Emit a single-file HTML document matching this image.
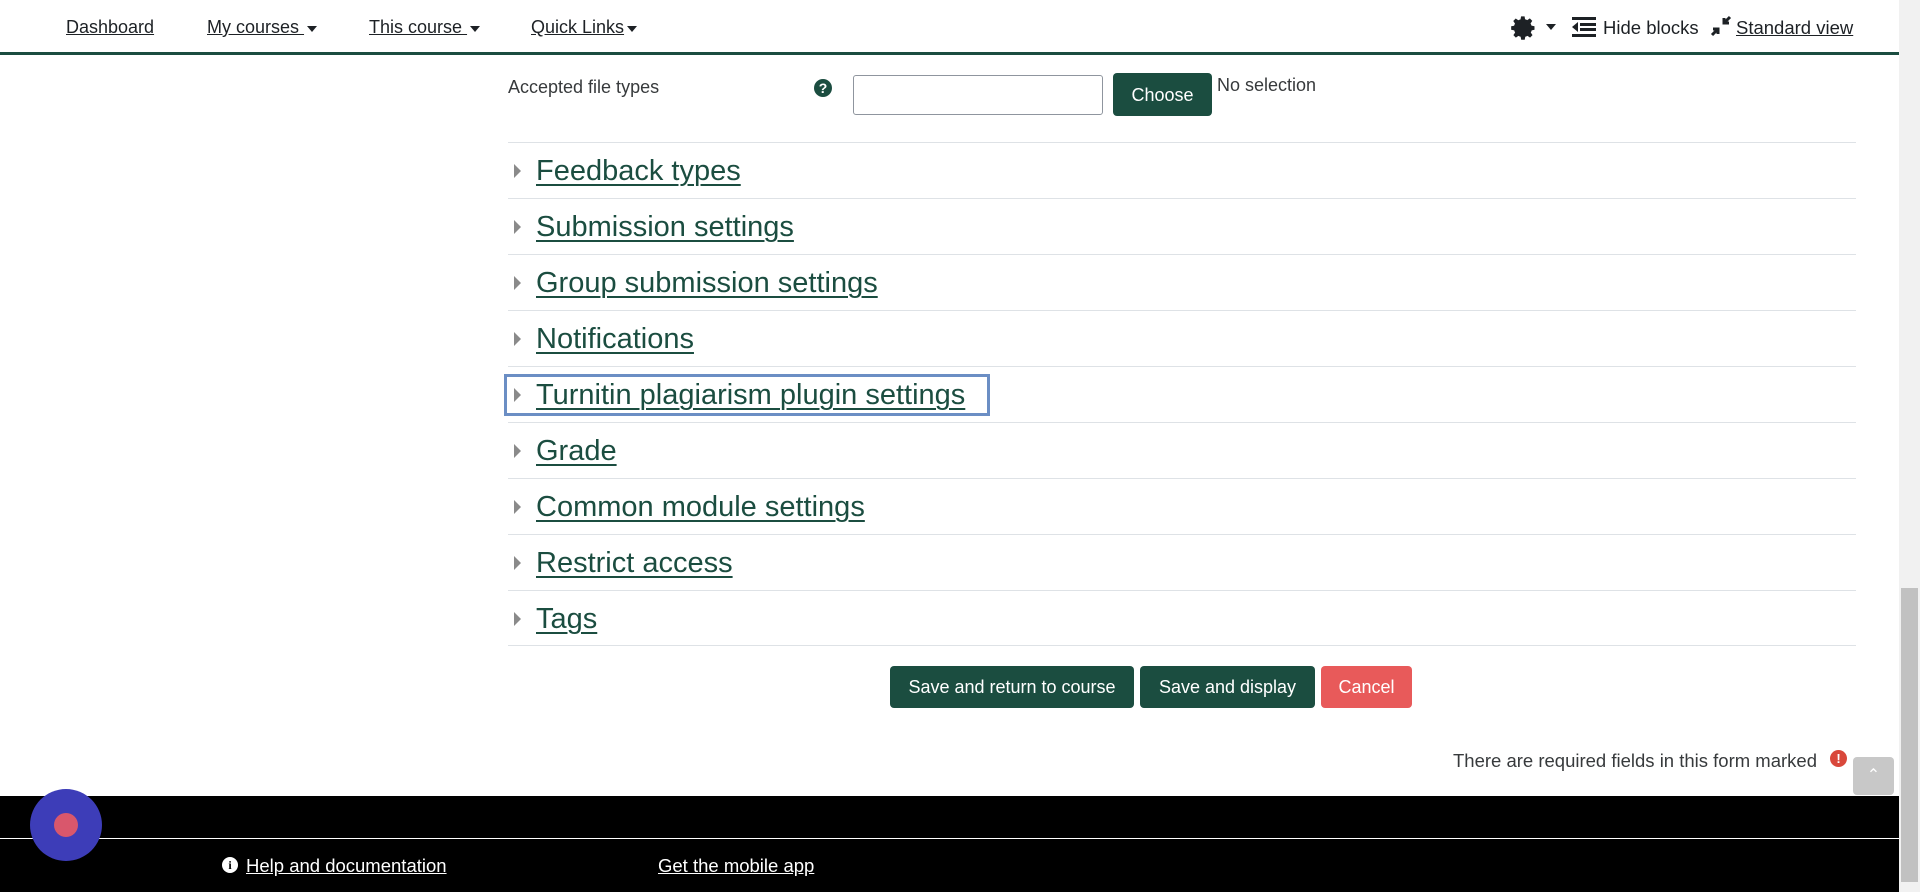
<!DOCTYPE html>
<html><head><meta charset="utf-8"><style>
*{box-sizing:border-box;margin:0;padding:0}
body{width:1920px;height:892px;overflow:hidden;background:#fff;font-family:"Liberation Sans",sans-serif;color:#373a3c;position:relative}
.a{position:absolute;white-space:nowrap}
.nav a{color:#1d2125;text-decoration:underline;font-size:18px}
.tri{display:inline-block;width:0;height:0;border-left:5px solid transparent;border-right:5px solid transparent;border-top:6px solid #1d2125;vertical-align:middle;margin-left:3px}
.line{position:absolute;left:508px;width:1348px;height:1px;background:#dee2e6}
.sec{position:absolute;left:536px;font-size:29px;color:#1b4d40;text-decoration:underline;text-decoration-thickness:2px;text-underline-offset:4px}
.arr{position:absolute;left:514px;width:0;height:0;border-top:7px solid transparent;border-bottom:7px solid transparent;border-left:7px solid #8a8a8a}
.btn{position:absolute;top:666px;height:42px;border-radius:4px;color:#fff;font-size:18px;line-height:42px;text-align:center}
</style></head><body>
<div class="a nav" style="left:66px;top:17px"><a>Dashboard</a></div>
<div class="a nav" style="left:207px;top:17px"><a>My courses </a><span class="tri"></span></div>
<div class="a nav" style="left:369px;top:17px"><a>This course </a><span class="tri"></span></div>
<div class="a nav" style="left:531px;top:17px"><a>Quick Links</a><span class="tri"></span></div>
<svg class="a" style="left:1510px;top:14px" width="28" height="28" viewBox="0 0 24 24"><path fill="#1d2125" d="M12 8a4 4 0 1 0 0 8 4 4 0 0 0 0-8zm9 5.5v-3l-2.6-.5a7 7 0 0 0-.8-1.9l1.5-2.2-2.1-2.1-2.2 1.5a7 7 0 0 0-1.9-.8L12.5 2h-3l-.5 2.6a7 7 0 0 0-1.9.8L4.9 3.9 2.8 6l1.5 2.2a7 7 0 0 0-.8 1.9L1 10.5v3l2.6.5c.2.7.4 1.3.8 1.9l-1.5 2.2 2.1 2.1 2.2-1.5c.6.4 1.2.6 1.9.8l.5 2.6h3l.5-2.6c.7-.2 1.3-.4 1.9-.8l2.2 1.5 2.1-2.1-1.5-2.2c.4-.6.6-1.2.8-1.9z"/></svg>
<span class="a tri" style="left:1543px;top:24px"></span>
<svg class="a" style="left:1572px;top:17px" width="24" height="20" viewBox="0 0 24 20"><rect x="0" y="0" width="24" height="3" fill="#1d2125"/><rect x="8" y="6" width="16" height="3" fill="#1d2125"/><rect x="8" y="11" width="16" height="3" fill="#1d2125"/><rect x="0" y="17" width="24" height="3" fill="#1d2125"/><path d="M6 5v10L0 10z" fill="#1d2125"/></svg>
<div class="a" style="left:1603px;top:17px;font-size:18.5px;color:#1d2125">Hide blocks</div>
<svg class="a" style="left:1710px;top:15px" width="22" height="22" viewBox="0 0 22 22"><path d="M20 2l-6 6M14 3v5h5M2 20l6-6M8 19v-5H3" stroke="#1d2125" stroke-width="3" fill="none"/></svg>
<div class="a nav" style="left:1736px;top:17px"><a style="font-size:18.5px">Standard view</a></div>
<div class="a" style="left:0;top:52px;width:1899px;height:3px;background:#1b4d40"></div>
<div class="a" style="left:1899px;top:0;width:21px;height:892px;background:#f1f1f1"></div>
<div class="a" style="left:1901px;top:588px;width:17px;height:294px;background:#c1c1c1"></div>

<div class="a" style="left:508px;top:77px;font-size:18px">Accepted file types</div>
<div class="a" style="left:814px;top:79px;width:18px;height:18px;border-radius:50%;background:#1b4d40;color:#fff;font-size:14px;font-weight:bold;text-align:center;line-height:18px">?</div>
<div class="a" style="left:853px;top:75px;width:250px;height:40px;border:1px solid #8f959e;border-radius:3px"></div>
<div class="a" style="left:1113px;top:73px;width:99px;height:43px;background:#1b4d40;border-radius:4px;color:#fff;font-size:18px;line-height:45px;text-align:center">Choose</div>
<div class="a" style="left:1217px;top:75px;font-size:18px">No selection</div>

<div class="line" style="top:142px"></div>
<div class="line" style="top:198px"></div>
<div class="line" style="top:254px"></div>
<div class="line" style="top:310px"></div>
<div class="line" style="top:366px"></div>
<div class="line" style="top:422px"></div>
<div class="line" style="top:478px"></div>
<div class="line" style="top:534px"></div>
<div class="line" style="top:590px"></div>
<div class="line" style="top:645px"></div>

<div class="arr" style="top:164px"></div><div class="sec" style="top:155px">Feedback types</div>
<div class="arr" style="top:220px"></div><div class="sec" style="top:211px">Submission settings</div>
<div class="arr" style="top:276px"></div><div class="sec" style="top:267px">Group submission settings</div>
<div class="arr" style="top:332px"></div><div class="sec" style="top:323px">Notifications</div>
<div class="a" style="left:504px;top:374px;width:486px;height:42px;border:3px solid #6b8ec4"></div>
<div class="arr" style="top:388px"></div><div class="sec" style="top:379px">Turnitin plagiarism plugin settings</div>
<div class="arr" style="top:444px"></div><div class="sec" style="top:435px">Grade</div>
<div class="arr" style="top:500px"></div><div class="sec" style="top:491px">Common module settings</div>
<div class="arr" style="top:556px"></div><div class="sec" style="top:547px">Restrict access</div>
<div class="arr" style="top:612px"></div><div class="sec" style="top:603px">Tags</div>

<div class="btn" style="left:890px;width:244px;background:#1b4d40">Save and return to course</div>
<div class="btn" style="left:1140px;width:175px;background:#1b4d40">Save and display</div>
<div class="btn" style="left:1321px;width:91px;background:#e85a5a">Cancel</div>

<div class="a" style="left:1453px;top:750px;font-size:18.5px">There are required fields in this form marked</div>
<div class="a" style="left:1830px;top:750px;width:17px;height:17px;border-radius:50%;background:#d9483b;color:#fff;font-size:13px;font-weight:bold;text-align:center;line-height:17px">!</div>
<div class="a" style="left:1853px;top:757px;width:41px;height:38px;background:#c8c8c8;border-radius:4px;color:#fff;text-align:center;line-height:38px;font-size:16px">&#x2303;</div>

<div class="a" style="left:0;top:796px;width:1899px;height:96px;background:#000"></div>
<div class="a" style="left:0;top:838px;width:1899px;height:1px;background:#fff"></div>
<div class="a" style="left:222px;top:857px;width:16px;height:16px;border-radius:50%;background:#fff;color:#000;font-size:12px;font-weight:bold;text-align:center;line-height:16px;font-family:'Liberation Serif',serif">i</div>
<div class="a" style="left:246px;top:855px;font-size:18.5px;color:#fff;text-decoration:underline">Help and documentation</div>
<div class="a" style="left:658px;top:855px;font-size:18.5px;color:#fff;text-decoration:underline">Get the mobile app</div>
<div class="a" style="left:30px;top:789px;width:72px;height:72px;border-radius:50%;background:#3d3db8"></div>
<div class="a" style="left:54px;top:813px;width:24px;height:24px;border-radius:50%;background:#d9576c"></div>
</body></html>
